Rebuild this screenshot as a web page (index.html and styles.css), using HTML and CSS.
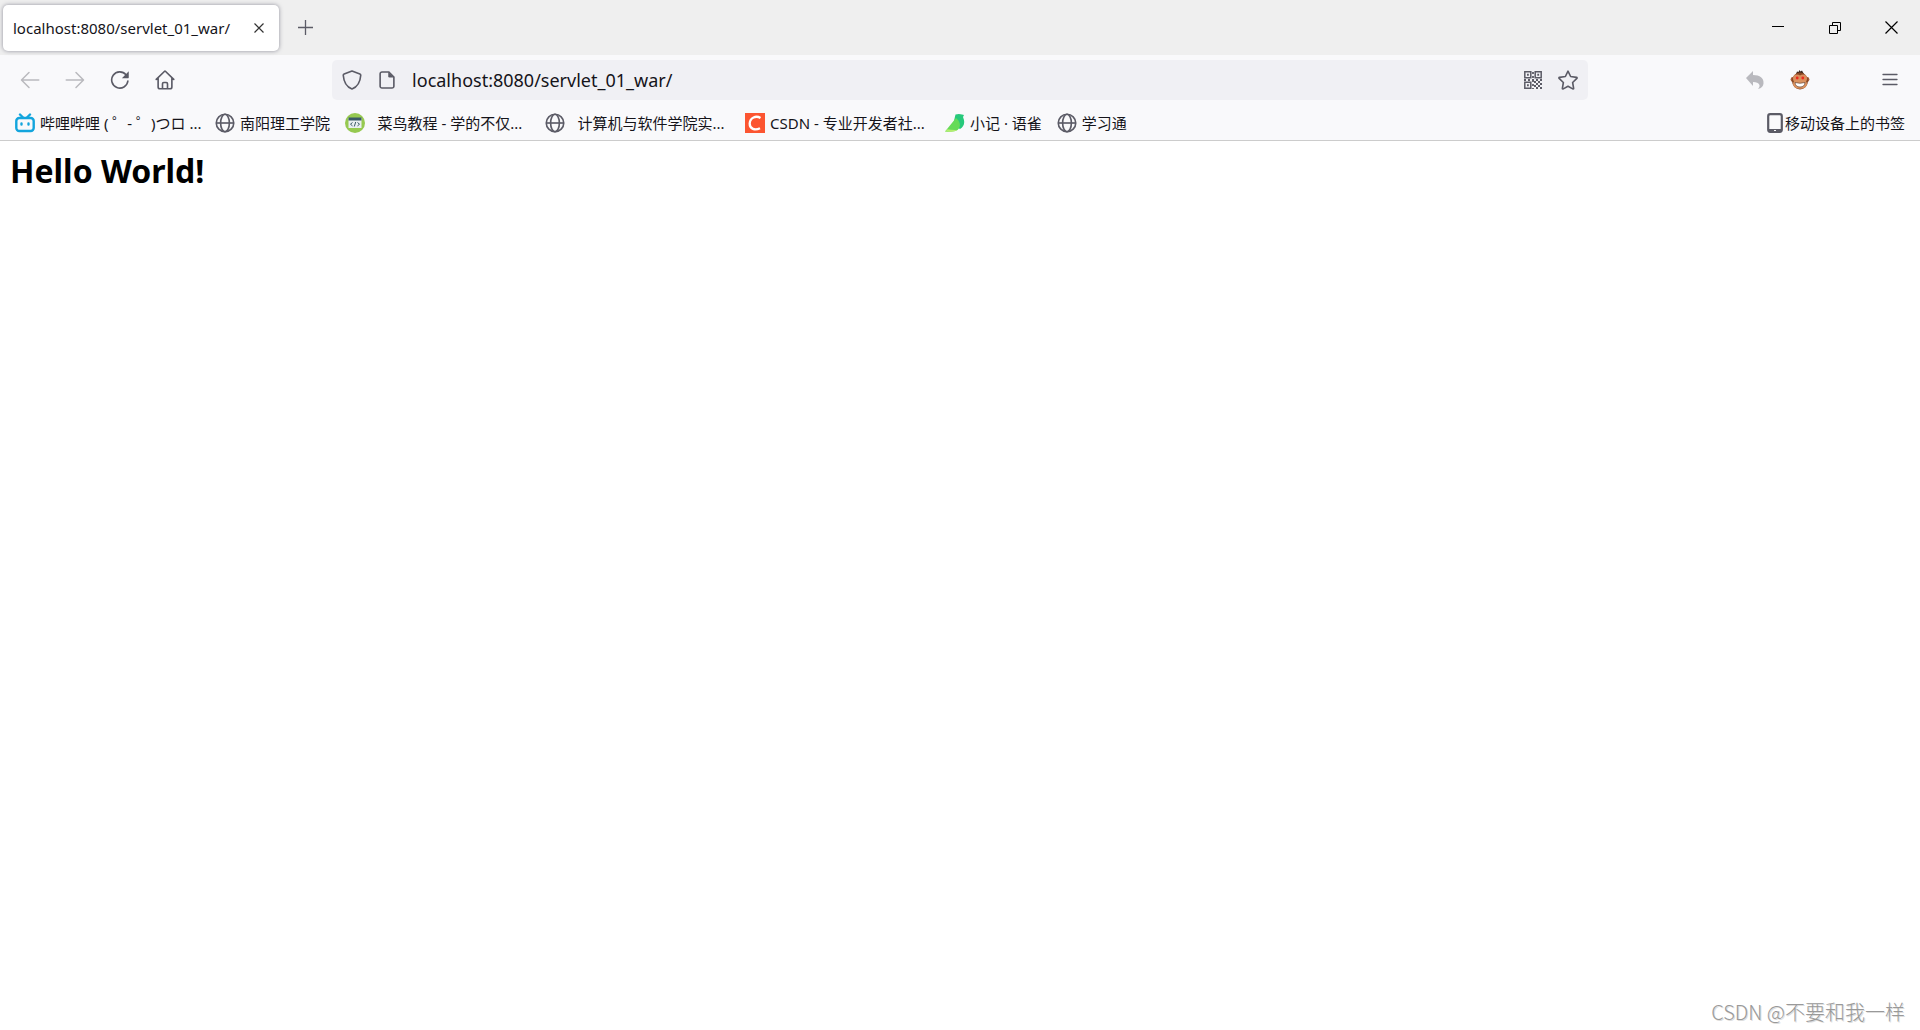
FILE: index.html
```html
<!DOCTYPE html>
<html lang="zh-CN">
<head>
<meta charset="utf-8">
<meta name="viewport" content="width=device-width, initial-scale=1">
<title>localhost:8080/servlet_01_war/</title>
<link rel="stylesheet" href="styles.css">
</head>
<body>
<svg class="defs" aria-hidden="true">
  <symbol id="globe" viewBox="0 0 16 16"><g fill="none" stroke="currentColor" stroke-width="1.3"><circle cx="8" cy="8" r="7"/><ellipse cx="8" cy="8" rx="3.5" ry="7"/><path d="M1 8h14"/></g></symbol>
</svg>
<header class="browser">
  <div class="tabs">
    <div class="tab">
      <span class="tab-title">localhost:8080/servlet_01_war/</span>
      <button class="tab-close" aria-label="关闭标签页"><svg width="10" height="10" viewBox="0 0 10 10"><path d="M.5.5l9 9M9.500.5l-9 9" stroke="currentColor" stroke-width="1.2"/></svg></button>
    </div>
    <button class="new-tab" aria-label="新建标签页"><svg width="15" height="15" viewBox="0 0 15 15"><path d="M7.500 0v15M0 7.500h15" stroke="currentColor" stroke-width="1.3"/></svg></button>
    <div class="window-controls">
      <button aria-label="最小化"><svg width="12" height="13" viewBox="0 0 12 13"><path d="M0 5.500h12" stroke="currentColor"/></svg></button>
      <button aria-label="还原"><svg width="12" height="12" viewBox="0 0 12 12"><path d="M.5 3.500h8v8h-8zM3.500 3.500v-3h8v8h-3" fill="none" stroke="currentColor"/></svg></button>
      <button aria-label="关闭"><svg width="13" height="13" viewBox="0 0 13 13"><path d="M.5.5l12 12M12.500.5l-12 12" stroke="currentColor" stroke-width="1.2"/></svg></button>
    </div>
  </div>

  <div class="toolbar">
    <button class="tool" aria-label="后退" disabled><svg class="icon" viewBox="0 0 16 16"><path d="M15 8H1.500M7.200 2L1.200 8l6 6" fill="none" stroke="currentColor" stroke-width="1.2" stroke-linecap="round" stroke-linejoin="round"/></svg></button>
    <button class="tool" aria-label="前进" disabled><svg class="icon" viewBox="0 0 16 16"><path d="M1 8h13.500M8.800 2l6 6-6 6" fill="none" stroke="currentColor" stroke-width="1.2" stroke-linecap="round" stroke-linejoin="round"/></svg></button>
    <button class="tool" aria-label="刷新"><svg class="icon" viewBox="0 0 16 16"><path d="M14.300 8.800A6.500 6.500 0 1 1 12.800 3.800" fill="none" stroke="currentColor" stroke-width="1.300" stroke-linecap="round"/><path d="M15 1v5a.5.5 0 0 1-.5.5h-5z" fill="currentColor"/></svg></button>
    <button class="tool" aria-label="主页"><svg class="icon" viewBox="0 0 16 16"><path d="M1 7.500L7.500 1.200q.5-.5 1 0L15 7.500M2.500 6.500v7a1.500 1.500 0 0 0 1.500 1.500h8a1.500 1.500 0 0 0 1.500-1.500v-7M6 15v-4a1 1 0 0 1 1-1h2a1 1 0 0 1 1 1v4" fill="none" stroke="currentColor" stroke-width="1.300" stroke-linecap="round" stroke-linejoin="round"/></svg></button>
    <span class="spacer"></span>
    <div class="urlbar">
      <svg class="icon" viewBox="0 0 16 16"><path d="M8 .8L14.300 3.200c.5.200.7.500.7 1C14.600 9.500 12.500 13.500 8 15.200 3.500 13.500 1.400 9.500 1 4.200c0-.5.200-.8.7-1z" fill="none" stroke="currentColor" stroke-width="1.300" stroke-linejoin="round"/></svg>
      <svg class="icon" viewBox="0 0 16 16"><path d="M9.500 1.600H4A1.500 1.500 0 0 0 2.500 3.100v9.800A1.500 1.500 0 0 0 4 14.400h8a1.500 1.500 0 0 0 1.500-1.500V5.600z" fill="none" stroke="currentColor" stroke-width="1.300"/><path d="M9 1.500V5a1 1 0 0 0 1 1h3.600z" fill="currentColor"/></svg>
      <input class="address" type="text" aria-label="地址" value="localhost:8080/servlet_01_war/" spellcheck="false">
      <button class="url-button" aria-label="二维码"><svg width="18" height="18" viewBox="0 0 18 18" fill="none" stroke="currentColor"><path stroke-width="1.500" d="M.8.8h6v6h-6zM11.200.8h6v6h-6zM.8 11.200h6v6h-6z"/><path stroke-width="2" d="M3 3.800h1.800M13.300 3.800h1.800M3 14.200h1.800"/><path stroke-width="1.800" stroke-dasharray="2 2" d="M0 9h18M9 1v17M10 11h8M12 13h6M10 15h8M12 17h6"/></svg></button>
      <button class="url-button" aria-label="添加书签"><svg class="icon" viewBox="0 0 16 16"><path d="M8 .9l2.100 4.300 4.700.7c.5.100.6.500.300.8L11.700 10l.8 4.700c0 .4-.3.600-.7.400L8 13l-3.800 2.100c-.4.200-.7 0-.7-.4L4.300 10 .9 6.700c-.3-.3-.2-.7.3-.8l4.700-.7z" fill="none" stroke="currentColor" stroke-width="1.300" stroke-linejoin="round"/></svg></button>
    </div>
    <span class="spacer"></span>
    <button class="tool" aria-label="撤销关闭标签页" disabled><svg class="icon" viewBox="0 0 20 20"><path d="M8 1v4c7 0 11 3 10.500 8.500-.3 3-2 4.500-5.500 5.500 3-3 2-7-5-7v4L1 8z" fill="currentColor"/></svg></button>
    <button class="tool" aria-label="Tampermonkey"><svg class="icon" viewBox="0 0 20 20"><circle cx="3" cy="9.500" r="2.400" fill="#a45b35"/><circle cx="17" cy="9.500" r="2.400" fill="#a45b35"/><path d="M6 4l1-2.500L8.500 2l1-2 1 1.600L12 .5l.8 1.600L14 4z" fill="#3a2820"/><ellipse cx="10" cy="11" rx="8" ry="8.500" fill="#864522"/><ellipse cx="7" cy="8.500" rx="4" ry="4" fill="#d98d5c"/><ellipse cx="13" cy="8.500" rx="4" ry="4" fill="#d98d5c"/><ellipse cx="10" cy="14" rx="7" ry="4.800" fill="#dc935f"/><circle cx="7.200" cy="8" r="1.400" fill="#ed2a1d"/><circle cx="12.800" cy="8" r="1.400" fill="#ed2a1d"/><path d="M5 12.500q5 1.500 10 0-.5 4.500-5 4.500t-5-4.500z" fill="#fff" stroke="#6a4a3a" stroke-width=".7"/></svg></button>
    <span class="tool"></span>
    <button class="tool" aria-label="打开应用程序菜单"><svg width="16" height="16" viewBox="0 0 16 16"><path d="M1 2.500h14M1 7.500h14M1 12.500h14" stroke="currentColor" stroke-width="1.300" stroke-linecap="round"/></svg></button>
  </div>

  <nav class="bookmarks" aria-label="书签">
    <a href="#"><svg class="icon" viewBox="0 0 20 20" fill="none" stroke="#13a5dd" stroke-width="2.400" stroke-linecap="round"><rect x="1.300" y="5" width="17.400" height="13" rx="3"/><path d="M5 1.500l3 3M15 1.500l-3 3M6.500 10.500v1M13.500 10.500v1"/></svg><span class="label long">哔哩哔哩 ( ゜- ゜)つロ ...</span></a>
    <a href="#"><svg class="icon"><use href="#globe"/></svg><span class="label">南阳理工学院</span></a>
    <a href="#"><svg class="icon" viewBox="0 0 20 20"><circle cx="10" cy="10" r="10" fill="#96c950"/><path d="M3.500 5h13v10h-13z" fill="#e9eef0"/><path d="M3.500 4.500h13v3h-13z" fill="#3b5a66"/><path d="M7.500 9.500l-2 1.700 2 1.700M12.500 9.500l2 1.700-2 1.700M10.700 9l-1.400 4.500" fill="none" stroke="#3b5a66"/></svg><span class="label long">&ensp;菜鸟教程 - 学的不仅...</span></a>
    <a href="#"><svg class="icon"><use href="#globe"/></svg><span class="label long">&ensp;计算机与软件学院实...</span></a>
    <a href="#"><svg class="icon" viewBox="0 0 20 20"><path d="M0 0h20v20H0z" fill="#fc5531"/><path d="M15.500 5C11 2.200 5 4.500 4.700 10.500c-.1 5.500 5.300 7.300 10.300 4.700" fill="none" stroke="#fff" stroke-width="2.300"/></svg><span class="label long">CSDN - 专业开发者社...</span></a>
    <a href="#"><svg class="icon" viewBox="0 0 20 20"><path d="M10.500 1.500c3-1 5-.5 6.500 0l2 .5-1 2c2.500 5.500 1 10-3 12L8 12z" fill="#27c97b"/><path d="M11 5L0 18.500c6 .5 11 0 13-2 3-3 2.500-8-2-11.500z" fill="#66db58"/><path d="M0 18.500l2.500-2.300c3 .8 6.500.8 10 .7-2.500 1.700-7 2-12.500 1.600z" fill="#b4ee70"/></svg><span class="label">小记 · 语雀</span></a>
    <a href="#"><svg class="icon"><use href="#globe"/></svg><span class="label">学习通</span></a>
    <a class="mobile" href="#"><svg width="16" height="20" viewBox="0 0 16 20"><rect x="1.200" y="1.200" width="13.600" height="17.600" rx="2" fill="none" stroke="currentColor" stroke-width="2.200"/><path d="M2 16h12v3H2z" fill="currentColor"/><path d="M7 17.500h2" stroke="#f9f9fb"/></svg><span class="label">移动设备上的书签</span></a>
  </nav>
</header>
<main>
  <h1>Hello World!</h1>
</main>
<div class="watermark">CSDN @不要和我一样</div>
</body>
</html>
```
FILE: styles.css
```css
* { box-sizing: border-box; }

body {
  margin: 0;
  min-height: 100vh;
  position: relative;
  background: #fff;
  color: #000;
  font: 15px/20px "Noto Sans", "Noto Sans CJK SC", sans-serif;
}

button {
  display: flex;
  align-items: center;
  justify-content: center;
  padding: 0;
  border: 0;
  background: none;
  color: inherit;
}

.defs { position: absolute; width: 0; height: 0; }
.icon { width: 20px; height: 20px; flex: none; }

.browser {
  background: #f9f9fb;
  border-bottom: 1px solid #ccc;
  color: #5b5b66;
}

.tabs {
  display: flex;
  align-items: center;
  height: 55px;
  padding-left: 3px;
  background: #efefef;
}
.tab {
  display: flex;
  align-items: center;
  width: 276px;
  height: 46px;
  padding: 0 10px;
  border-radius: 5px;
  background: #fff;
  box-shadow: 0 0 4px rgba(80, 80, 100, .6);
  color: #15141a;
}
.tab-title {
  flex: 1;
  white-space: nowrap;
}
.tab-close { width: 20px; height: 30px; color: #333; }
.new-tab { width: 52px; height: 46px; }
.window-controls {
  display: flex;
  align-self: stretch;
  margin-left: auto;
  color: #000;
}
.window-controls button { width: 57px; }

.toolbar {
  display: flex;
  align-items: center;
  height: 50px;
  padding: 0 7px;
}
.tool { width: 45px; height: 40px; flex: none; }
.tool:disabled { color: #b9b9be; }
.spacer { flex: 147; }
.urlbar {
  display: flex;
  align-items: center;
  gap: 15px;
  flex: 1252;
  height: 40px;
  padding: 0 10px;
  border-radius: 5px;
  background: #f0f0f4;
}
.address {
  flex: 1;
  min-width: 0;
  padding: 0;
  border: 0;
  outline: 0;
  background: none;
  color: #15141a;
  font: 18px/24px "Noto Sans", sans-serif;
}
.url-button { width: 20px; height: 30px; }

.bookmarks {
  display: flex;
  align-items: center;
  gap: 15px;
  height: 35px;
  padding: 0 15px;
}
.bookmarks a {
  display: flex;
  align-items: center;
  gap: 5px;
  color: #5b5b66;
  text-decoration: none;
}
.label { color: #15141a; white-space: nowrap; }
.long { width: 160px; }
.bookmarks .mobile { gap: 2px; margin-left: auto; }

h1 {
  margin: 0;
  padding: 10px;
  font-size: 32px;
  line-height: 40px;
}

.watermark {
  position: absolute;
  right: 15px;
  bottom: 6px;
  color: #999;
  font: 300 20px/24px "Noto Sans CJK SC", sans-serif;
  text-shadow: 1px 1px 0 #ddd;
}
```
